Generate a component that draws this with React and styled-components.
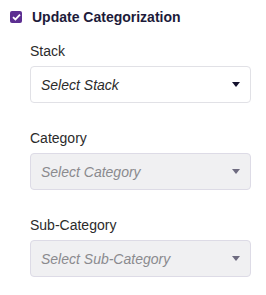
import React from 'react'
import styled, { createGlobalStyle } from 'styled-components'

const GlobalStyle = createGlobalStyle`
  body {
    margin: 0;
    background: #fff;
    font-family: "Liberation Sans", Arial, sans-serif;
  }
`

const Panel = styled.div`
  width: 266px;
  height: 295px;
  padding: 10px 15px 0 10px;
  box-sizing: border-box;
`

const Header = styled.label`
  display: flex;
  align-items: center;
  gap: 10px;
  height: 13px;
  font-size: 14px;
  font-weight: bold;
  color: #1d1b3a;
`

const Check = styled.span`
  width: 12px;
  height: 12px;
  border-radius: 2px;
  background: #5c2e91;
  display: flex;
  align-items: center;
  justify-content: center;
`

const Fields = styled.div`
  display: flex;
  flex-direction: column;
  gap: 27px;
  padding: 20px 0 0 20px;
`

const Field = styled.div`
  display: flex;
  flex-direction: column;
  gap: 7px;
`

const Label = styled.div`
  font-size: 14px;
  line-height: 16px;
  color: #2b2b2b;
`

const Select = styled.div`
  height: 37px;
  box-sizing: border-box;
  border: 1px solid ${p => (p.disabled ? '#dddbe6' : '#e1e1e6')};
  border-radius: 4px;
  background: ${p => (p.disabled ? '#f0f0f2' : '#fff')};
  display: flex;
  align-items: center;
  justify-content: space-between;
  padding: 0 10px 0 10px;
  font-size: 14px;
  font-style: italic;
  color: ${p => (p.disabled ? '#8a8a8e' : '#2b2b2b')};
`

const Caret = styled.span`
  width: 0;
  height: 0;
  border-left: 4.5px solid transparent;
  border-right: 4.5px solid transparent;
  border-top: 5px solid ${p => (p.disabled ? '#6e6b80' : '#14112e')};
`

const fields = [
  { label: 'Stack', placeholder: 'Select Stack' },
  { label: 'Category', placeholder: 'Select Category', disabled: true },
  { label: 'Sub-Category', placeholder: 'Select Sub-Category', disabled: true },
]

export default function App() {
  return (
    <>
      <GlobalStyle />
      <Panel>
        <Header>
          <Check>
            <svg width='9' height='8' viewBox='0 0 9 8'>
              <path d='M1 4.2 L3.4 6.4 L8 1.6' fill='none' stroke='#fff' strokeWidth='1.8' />
            </svg>
          </Check>
          Update Categorization
        </Header>
        <Fields>
          {fields.map(f => (
            <Field key={f.label}>
              <Label>{f.label}</Label>
              <Select disabled={f.disabled}>
                {f.placeholder}
                <Caret disabled={f.disabled} />
              </Select>
            </Field>
          ))}
        </Fields>
      </Panel>
    </>
  )
}
